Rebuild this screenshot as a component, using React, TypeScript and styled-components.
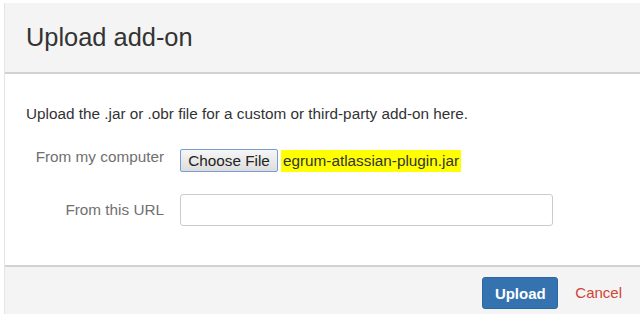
import React from "react";
import styled, { createGlobalStyle } from "styled-components";

const Global = createGlobalStyle`
  html, body { margin: 0; padding: 0; background: #fff; }
  body { font-family: "Liberation Sans", Arial, sans-serif; color: #333; }
  * { box-sizing: border-box; }
`;

const Dialog = styled.div`
  margin: 3px 0 0 4px;
  border-left: 1px solid #e4e4e4;
  height: 311px;
  display: flex;
  flex-direction: column;
  background: #fff;
`;

const Header = styled.div`
  height: 71px;
  background: #f4f4f4;
  border-bottom: 2px solid #d2d2d2;
  display: flex;
  align-items: center;
  padding-left: 21px;
`;

const Title = styled.h2`
  margin: 0;
  font-size: 25.4px;
  font-weight: normal;
  color: #333;
  line-height: 30px;
  padding-bottom: 2px;
`;

const Body = styled.div`
  flex: 1;
  padding: 30px 21px 0;
`;

const Intro = styled.p`
  margin: 0 0 25px;
  font-size: 15.3px;
  line-height: 20px;
`;

const FieldRow = styled.div<{ $gap: number }>`
  display: grid;
  grid-template-columns: 138px 1fr;
  column-gap: 16px;
  align-items: center;
  margin-bottom: ${(p) => p.$gap}px;
`;

const Label = styled.label<{ $offset?: number }>`
  text-align: right;
  color: #707070;
  font-size: 15.3px;
  line-height: 20px;
  position: relative;
  top: ${(p) => p.$offset ?? 0}px;
`;

const FileControl = styled.div`
  display: flex;
  align-items: center;
  gap: 3px;
`;

const ChooseButton = styled.button`
  font-family: "Liberation Sans", Arial, sans-serif;
  font-size: 15.3px;
  color: #222;
  height: 23px;
  width: 98px;
  padding: 0;
  border: 1px solid #7a9cd3;
  border-radius: 2px;
  background: linear-gradient(#f6f6f6, #dddddd);
`;

const FileName = styled.span`
  background: #ffff00;
  font-size: 15.3px;
  line-height: 22px;
  padding: 0 2px 0 2px;
  color: #333;
`;

const UrlInput = styled.input`
  width: 373px;
  height: 32px;
  border: 1px solid #cccccc;
  border-radius: 3px;
  font-family: inherit;
  font-size: 14px;
  padding: 0 8px;
  outline: none;
`;

const Footer = styled.div`
  height: 49px;
  background: #f4f4f4;
  border-top: 2px solid #d2d2d2;
  display: flex;
  justify-content: flex-end;
  align-items: flex-start;
  padding: 10px 18px 0 0;
  gap: 17px;
`;

const PrimaryButton = styled.button`
  font-family: "Liberation Sans", Arial, sans-serif;
  font-weight: bold;
  font-size: 15px;
  color: #fff;
  background: #3572b0;
  border: 1px solid #2a67a5;
  border-radius: 3px;
  height: 32px;
  width: 76px;
  padding: 0;
`;

const LinkButton = styled.a`
  font-size: 15px;
  color: #d04437;
  line-height: 32px;
  text-decoration: none;
  cursor: pointer;
`;

export default function App() {
  return (
    <>
      <Global />
      <Dialog>
        <Header>
          <Title>Upload add-on</Title>
        </Header>
        <Body>
          <Intro>Upload the .jar or .obr file for a custom or third-party add-on here.</Intro>
          <FieldRow $gap={22}>
            <Label $offset={-4}>From my computer</Label>
            <FileControl>
              <ChooseButton>Choose File</ChooseButton>
              <FileName>egrum-atlassian-plugin.jar</FileName>
            </FileControl>
          </FieldRow>
          <FieldRow $gap={0}>
            <Label>From this URL</Label>
            <UrlInput type="text" />
          </FieldRow>
        </Body>
        <Footer>
          <PrimaryButton>Upload</PrimaryButton>
          <LinkButton>Cancel</LinkButton>
        </Footer>
      </Dialog>
    </>
  );
}
